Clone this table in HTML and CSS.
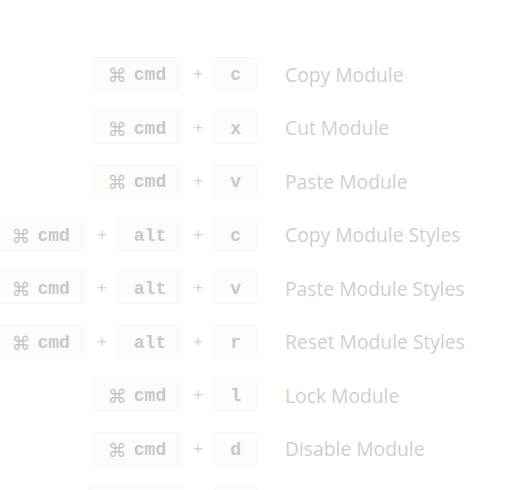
FILE: index.html
```html
<!DOCTYPE html>
<html>
<head>
<meta charset="utf-8">
<link rel="stylesheet" href="styles.css">
</head>
<body>
<div class="list">
  <div class="row">
    <div class="keys"><span class="key"><span class="cmd-sym">⌘</span>cmd</span><span class="plus">+</span><span class="key">c</span></div>
    <div class="label">Copy Module</div>
  </div>
  <div class="row">
    <div class="keys"><span class="key"><span class="cmd-sym">⌘</span>cmd</span><span class="plus">+</span><span class="key">x</span></div>
    <div class="label">Cut Module</div>
  </div>
  <div class="row">
    <div class="keys"><span class="key"><span class="cmd-sym">⌘</span>cmd</span><span class="plus">+</span><span class="key">v</span></div>
    <div class="label">Paste Module</div>
  </div>
  <div class="row">
    <div class="keys"><span class="key"><span class="cmd-sym">⌘</span>cmd</span><span class="plus">+</span><span class="key">alt</span><span class="plus">+</span><span class="key">c</span></div>
    <div class="label">Copy Module Styles</div>
  </div>
  <div class="row">
    <div class="keys"><span class="key"><span class="cmd-sym">⌘</span>cmd</span><span class="plus">+</span><span class="key">alt</span><span class="plus">+</span><span class="key">v</span></div>
    <div class="label">Paste Module Styles</div>
  </div>
  <div class="row">
    <div class="keys"><span class="key"><span class="cmd-sym">⌘</span>cmd</span><span class="plus">+</span><span class="key">alt</span><span class="plus">+</span><span class="key">r</span></div>
    <div class="label">Reset Module Styles</div>
  </div>
  <div class="row">
    <div class="keys"><span class="key"><span class="cmd-sym">⌘</span>cmd</span><span class="plus">+</span><span class="key">l</span></div>
    <div class="label">Lock Module</div>
  </div>
  <div class="row">
    <div class="keys"><span class="key"><span class="cmd-sym">⌘</span>cmd</span><span class="plus">+</span><span class="key">d</span></div>
    <div class="label">Disable Module</div>
  </div>
  <div class="row row-partial">
    <div class="keys"><span class="key key-wide"></span><span class="plus"></span><span class="key key-single"></span></div>
    <div class="label"></div>
  </div>
</div>
</body>
</html>
```

FILE: styles.css
```css
html, body {
  margin: 0;
  padding: 0;
  background: #ffffff;
}

body {
  width: 506px;
  height: 490px;
  overflow: hidden;
}

.list {
  padding-top: 57px;
  display: flex;
  flex-direction: column;
  gap: 20.57px;
}

.row {
  display: grid;
  grid-template-columns: 257px 1fr;
  column-gap: 28px;
  align-items: center;
  height: 33px;
}

.keys {
  display: flex;
  justify-content: flex-end;
  align-items: center;
  height: 33px;
  min-width: 0;
}

.key {
  flex: none;
  display: flex;
  align-items: center;
  height: 33px;
  box-sizing: border-box;
  padding: 3px 15px 0;
  background: #fcfcfc;
  border: 1px solid #f8f8f8;
  border-radius: 3px;
  font-family: "Liberation Mono", "DejaVu Sans Mono", monospace;
  font-weight: bold;
  font-size: 18px;
  color: #c8c8c8;
  white-space: nowrap;
}

.key-wide {
  width: 95px;
}

.key-single {
  width: 42px;
}

.cmd-sym {
  font-family: "DejaVu Sans", sans-serif;
  font-weight: normal;
  font-size: 19px;
  margin-right: 7px;
}

.plus {
  flex: none;
  width: 32px;
  text-align: center;
  font-family: "Liberation Mono", monospace;
  font-size: 17px;
  color: #d2d2d2;
  padding-top: 2px;
}

.label {
  font-family: "Open Sans", sans-serif;
  font-size: 19.3px;
  font-weight: 400;
  color: #cfcfcf;
  white-space: nowrap;
  padding-top: 1px;
}
```
